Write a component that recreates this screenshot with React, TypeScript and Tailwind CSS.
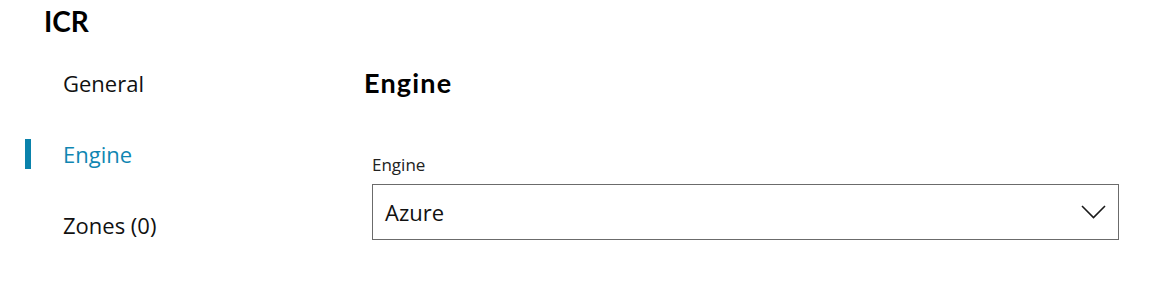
import React from "react";

const body = { fontFamily: '"Open Sans", "Noto Sans", sans-serif' };
const head = { fontFamily: 'Lato, "Open Sans", sans-serif' };

function NavItem({ label, active }: { label: string; active?: boolean }) {
  return (
    <div className="flex items-center h-[30px] pl-[25px]">
      <div className={active ? "w-[6px] h-[30px] bg-[#0a82ab]" : "w-[6px] h-[30px]"} />
      <span
        className={
          "ml-[32px] text-[22px] leading-[30px] " +
          (active ? "text-[#0f86b2]" : "text-[#111]")
        }
      >
        {label}
      </span>
    </div>
  );
}

export default function App() {
  return (
    <div className="w-[1160px] h-[288px] bg-white overflow-hidden" style={body}>
      <div className="h-[68px]">
        <h1
          className="pl-[44px] pt-[3px] text-[28px] leading-[36px] font-bold text-black"
          style={head}
        >
          ICR
        </h1>
      </div>
      <div className="flex">
        <nav className="w-[362px] flex flex-col gap-[41px]">
          <NavItem label="General" />
          <NavItem label="Engine" active />
          <NavItem label="Zones (0)" />
        </nav>
        <main className="flex flex-col">
          <h2
            className="h-[30px] pl-[2px] flex items-center text-[27px] font-bold text-black tracking-[1.2px]"
            style={head}
          >
            Engine
          </h2>
          <div className="pl-[10px] mt-[56px] flex flex-col">
            <label className="text-[17px] leading-[22px] text-[#222]">Engine</label>
            <div className="mt-[8px] w-[747px] h-[56px] border border-[#6b6b6b] flex items-center justify-between pl-[12px] pr-[12px]">
              <span className="text-[22px] text-[#111]">Azure</span>
              <svg width="25" height="14" viewBox="0 0 25 14" fill="none">
                <polyline points="1,1 12.5,12.5 24,1" stroke="#1a1a1a" strokeWidth="1.6" />
              </svg>
            </div>
          </div>
        </main>
      </div>
    </div>
  );
}
